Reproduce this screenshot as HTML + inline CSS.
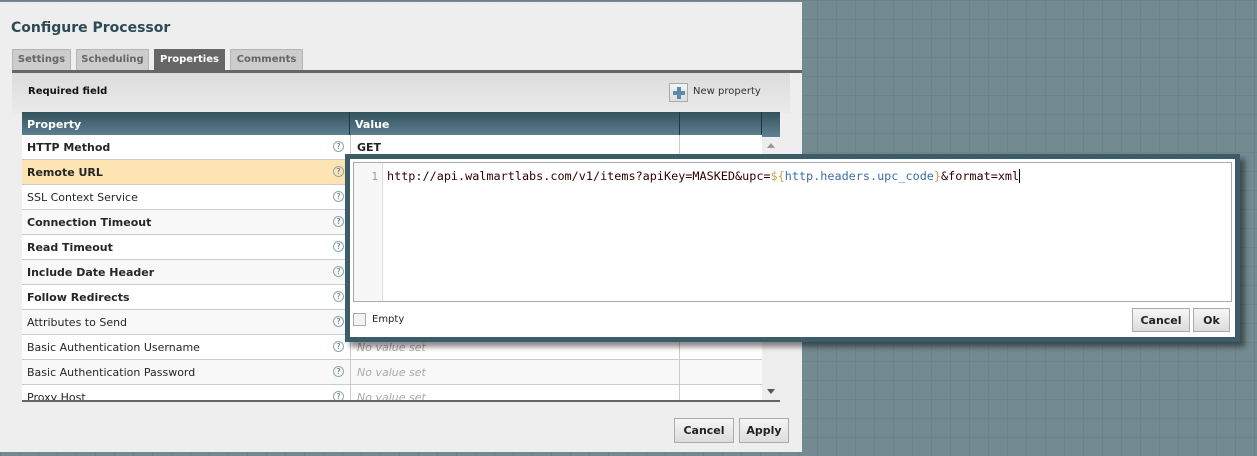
<!DOCTYPE html>
<html><head><meta charset="utf-8"><style>
*{box-sizing:border-box;margin:0;padding:0}
body{width:1257px;height:456px;overflow:hidden;font-family:"DejaVu Sans","Liberation Sans",sans-serif;font-size:11px;color:#262626;
background-color:#738a91;background-image:linear-gradient(#6b8289 1px,transparent 1px),linear-gradient(90deg,#6b8289 1px,transparent 1px);background-size:19px 19px;position:relative}
.dlg{position:absolute;left:0;top:2px;width:802px;height:450px;background:#eeeeee}
.title{position:absolute;left:11px;top:18px;font-size:14px;font-weight:bold;color:#2c4a56}
.tab{position:absolute;top:47px;height:21px;background:#ccc;border:1px solid #b5b5b5;border-bottom:none;color:#666;font-weight:bold;font-size:10px;line-height:20px;text-align:center}
.tab.a{background:#666;color:#fff;border-color:#666}
.bar{position:absolute;left:12px;top:68px;width:790px;height:3px;background:#666}
.hdr{position:absolute;left:12px;top:71px;width:778px;height:40px;background:linear-gradient(#dcdcdc,#eaeaea)}
.req{position:absolute;left:28px;top:84px;font-weight:bold;font-size:10px;color:#111}
.np{position:absolute;left:669px;top:81px;width:19px;height:19px;border:1px solid #aaa;background:linear-gradient(#f4f4f4,#ddd)}
.np:before{content:"";position:absolute;left:7px;top:3px;width:4px;height:12px;background:#5b8aa6}
.np:after{content:"";position:absolute;left:3px;top:7px;width:12px;height:4px;background:#5b8aa6}
.npl{position:absolute;left:693px;top:84px;font-size:10px;color:#333}
.th{position:absolute;top:110px;height:25px;background:linear-gradient(#34525e,#5e8394);color:#fff;font-weight:bold;font-size:11px;line-height:25px;padding-left:5px;border-right:1px solid #1f3640}
.row{position:absolute;left:22px;width:740px;height:25px;border-bottom:1px solid #ccc;background:#fff}
.row.g{background:#f8f8f8}
.row.h{background:#fde4b2}
.row .n{position:absolute;left:5px;top:6px;font-size:11px}
.row b{font-weight:bold}
.row .q{position:absolute;left:311px;top:6px;width:11px;height:11px;border-radius:50%;border:1px solid #8aa;color:#567;font-size:8px;line-height:9px;text-align:center}
.row .v{position:absolute;left:328px;top:0;width:330px;height:25px;border-left:1px solid #ccc;border-right:1px solid #ccc;padding:6px 6px;color:#aaa;font-style:italic}
.sb{position:absolute;left:762px;top:135px;width:18px;height:265px;background:#eee}
.btn{position:absolute;height:25px;border:1px solid #aaa;background:linear-gradient(#f6f6f6,#dcdcdc);font-weight:bold;font-size:11px;line-height:23px;text-align:center;color:#222}
.pop{position:absolute;left:345px;top:154px;width:895px;height:188px;background:#fff;border:5px solid #3b5c68;box-shadow:5px 5px 5px rgba(0,0,0,.45)}
.ed{position:absolute;left:3px;top:3px;width:879px;height:140px;border:1px solid #aaa;background:#fff}
.gut{position:absolute;left:0;top:0;width:29px;height:138px;background:#f7f7f7;border-right:1px solid #ddd;text-align:right;padding:7px 4px 0 0;color:#999;font-family:"DejaVu Sans Mono",monospace;font-size:11px}
.code{position:absolute;left:33px;top:6px;font-family:"DejaVu Sans Mono",monospace;font-size:11.8px;color:#300;white-space:pre}
</style></head><body>
<div class="dlg">
<div class="title">Configure Processor</div>
<div class="tab" style="left:12px;width:59px">Settings</div>
<div class="tab" style="left:76px;width:73px">Scheduling</div>
<div class="tab a" style="left:154px;width:71px">Properties</div>
<div class="tab" style="left:230px;width:73px">Comments</div>
<div class="bar"></div>
<div class="hdr"></div>
<div class="req">Required field</div>
<div class="np"></div><div class="npl">New property</div>
<div class="th" style="left:22px;width:328px">Property</div>
<div class="th" style="left:350px;width:330px">Value</div>
<div class="th" style="left:680px;width:82px"></div>
<div class="th" style="left:762px;width:18px;border:none"></div>
<div class="row" style="top:133px"><span class="n"><b>HTTP Method</b></span><span class="q">?</span><span class="v" style="color:#222;font-style:normal;font-weight:bold">GET</span></div>
<div class="row h" style="top:158px"><span class="n"><b>Remote URL</b></span><span class="q">?</span></div>
<div class="row" style="top:183px"><span class="n">SSL Context Service</span><span class="q">?</span></div>
<div class="row g" style="top:208px"><span class="n"><b>Connection Timeout</b></span><span class="q">?</span></div>
<div class="row" style="top:233px"><span class="n"><b>Read Timeout</b></span><span class="q">?</span></div>
<div class="row g" style="top:258px"><span class="n"><b>Include Date Header</b></span><span class="q">?</span></div>
<div class="row" style="top:283px"><span class="n"><b>Follow Redirects</b></span><span class="q">?</span></div>
<div class="row g" style="top:308px"><span class="n">Attributes to Send</span><span class="q">?</span></div>
<div class="row" style="top:333px"><span class="n">Basic Authentication Username</span><span class="q">?</span><span class="v">No value set</span></div>
<div class="row g" style="top:358px"><span class="n">Basic Authentication Password</span><span class="q">?</span><span class="v">No value set</span></div>
<div class="row" style="top:383px;height:15px;overflow:hidden;border:none"><span class="n">Proxy Host</span><span class="q">?</span><span class="v">No value set</span></div>
<div class="sb"><div style="position:absolute;left:5px;top:6px;border:4px solid transparent;border-bottom:5px solid #999;border-top:none"></div><div style="position:absolute;left:5px;top:252px;border:4px solid transparent;border-top:5px solid #555;border-bottom:none"></div></div>
<div style="position:absolute;left:22px;top:398px;width:758px;height:2px;background:#666"></div>
<div class="btn" style="left:674px;top:416px;width:60px">Cancel</div>
<div class="btn" style="left:739px;top:416px;width:50px">Apply</div>
</div>
<div class="pop">
<div class="ed"><div class="gut">1</div><div class="code">http://api.walmartlabs.com/v1/items?apiKey=MASKED&amp;upc=<span style="color:#c9a04a">${</span><span style="color:#3a6fa8">http.headers.upc_code</span><span style="color:#c9a04a">}</span>&amp;format=xml<span style="border-left:1px solid #000"></span></div></div>
<div style="position:absolute;left:3px;top:154px;width:13px;height:13px;border:1px solid #aaa;background:#f4f4f4"></div>
<div style="position:absolute;left:22px;top:155px;font-size:10px">Empty</div>
<div class="btn" style="left:782px;top:149px;width:58px;height:24px">Cancel</div>
<div class="btn" style="left:843px;top:149px;width:37px;height:24px">Ok</div>
</div>
</body></html>
